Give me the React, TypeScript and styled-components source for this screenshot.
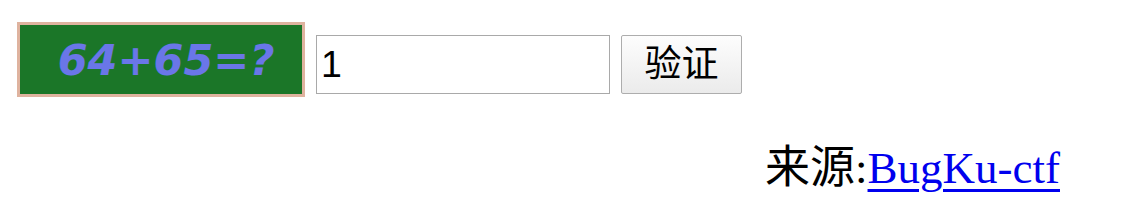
import React from "react";
import styled, { createGlobalStyle } from "styled-components";

const Global = createGlobalStyle`
  html, body { margin: 0; padding: 0; background: #ffffff; }
  body { font-family: "Liberation Serif", "Noto Sans CJK SC", serif; }
`;

const Page = styled.div`
  padding: 22px 0 0 17px;
  width: 1144px;
  box-sizing: border-box;
`;

const Form = styled.form`
  display: flex;
  align-items: flex-start;
  margin: 0;
`;

const Captcha = styled.div`
  box-sizing: border-box;
  width: 288px;
  height: 75px;
  background: #1b7628;
  border: 3px solid #dfb39f;
  display: flex;
  align-items: center;
  justify-content: center;
  padding-left: 10px;
  font-family: "DejaVu Sans", Verdana, sans-serif;
  font-weight: bold;
  font-style: italic;
  font-size: 43px;
  color: #6a76e8;
  letter-spacing: 0;
`;

const Input = styled.input`
  box-sizing: border-box;
  width: 294px;
  height: 59px;
  margin: 13px 0 0 11px;
  padding: 0 4px;
  border: 1px solid #a9a9a9;
  font-family: "Liberation Sans", Arial, sans-serif;
  font-size: 37.5px;
  color: #000;
  outline: none;
  background: #fff;
`;

const Button = styled.button`
  box-sizing: border-box;
  width: 121px;
  height: 59px;
  margin: 13px 0 0 11px;
  padding: 0;
  border: 1px solid #adadad;
  border-radius: 2px;
  background: linear-gradient(#fdfdfd, #ebebeb);
  font-family: "Liberation Serif", "Noto Sans CJK SC", serif;
  font-size: 37px;
  line-height: 1;
  color: #000;
`;

const Source = styled.div`
  display: flex;
  justify-content: flex-end;
  margin-top: 45px;
  padding-right: 84px;
  font-family: "Liberation Serif", "Noto Sans CJK SC", serif;
  font-size: 45px;
  line-height: 52px;
  color: #000;
`;

const Link = styled.a`
  color: #0000ee;
  text-decoration: underline;
  text-decoration-thickness: 3px;
  text-underline-offset: 6px;
`;

export default function App() {
  return (
    <>
      <Global />
      <Page>
        <Form onSubmit={(e) => e.preventDefault()}>
          <Captcha>64+65=?</Captcha>
          <Input defaultValue="1" />
          <Button type="submit">验证</Button>
        </Form>
        <Source>
          <span>来源:</span>
          <Link href="#">BugKu-ctf</Link>
        </Source>
      </Page>
    </>
  );
}
